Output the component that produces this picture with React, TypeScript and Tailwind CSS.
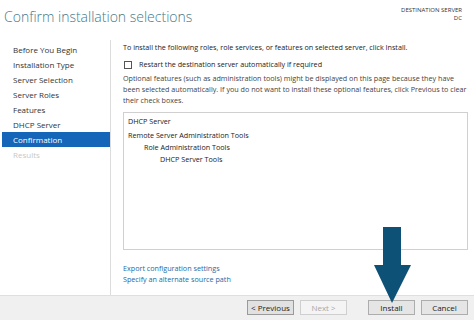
import React from "react";

const steps = [
  "Before You Begin",
  "Installation Type",
  "Server Selection",
  "Server Roles",
  "Features",
  "DHCP Server",
  "Confirmation",
  "Results",
];

function Arrow() {
  return (
    <svg className="absolute left-[373px] top-[227px]" width="40" height="76" viewBox="0 0 40 76">
      <path d="M10 0 H28 V38 H38 L19 76 L1 38 H10 Z" fill="#0d5176" />
    </svg>
  );
}

function Btn({ label, disabled, hi }: { label: string; disabled?: boolean; hi?: boolean }) {
  return (
    <div
      className={
        "w-[47px] h-[15px] flex items-center justify-center text-[8px] border " +
        (disabled
          ? "border-[#cfcfcf] bg-[#f4f4f4] text-[#a8a8a8]"
          : hi
          ? "border-[#9a9a9a] bg-[#e1e1e1] text-[#222]"
          : "border-[#adadad] bg-[#e5e5e5] text-[#222]")
      }
    >
      {label}
    </div>
  );
}

export default function App() {
  return (
    <div
      className="relative w-[474px] h-[320px] bg-white overflow-hidden text-[#222] flex flex-col"
      style={{ fontFamily: '"Open Sans", "Noto Sans", sans-serif' }}
    >
      <div className="flex justify-between h-[40px]">
        <h1 className="pl-[4px] pt-[7px] text-[14px] leading-[20px] font-light text-[#44798b]">
          Confirm installation selections
        </h1>
        <div className="pr-[12px] pt-[6px] text-right text-[6px] leading-[8px] text-[#333]">
          <div>DESTINATION SERVER</div>
          <div>DC</div>
        </div>
      </div>

      <div className="flex flex-1">
        <div className="w-[111px] border-r border-[#dcdcdc] pl-[2px] pt-[2px]">
          {steps.map((s) => (
            <div
              key={s}
              className={
                "h-[15px] pl-[11px] flex items-center text-[8px] " +
                (s === "Confirmation"
                  ? "bg-[#1565b9] text-white"
                  : s === "Results"
                  ? "text-[#c8c8c8]"
                  : "text-[#333]")
              }
            >
              {s}
            </div>
          ))}
        </div>

        <div className="flex-1 pl-[12px] pr-[6px] pt-[2px] text-[7.2px] leading-[11px] flex flex-col">
          <p>To install the following roles, role services, or features on selected server, click Install.</p>
          <div className="flex items-center gap-[7px] mt-[6px] ml-[1px]">
            <div className="w-[8px] h-[8px] border border-[#555] bg-white" />
            <span>Restart the destination server automatically if required</span>
          </div>
          <p className="mt-[3px] text-[#444]">
            Optional features (such as administration tools) might be displayed on this page because they have
            been selected automatically. If you do not want to install these optional features, click Previous to clear
            their check boxes.
          </p>
          <div className="mt-[6px] h-[138px] border border-[#d0d0d0] px-[4px] pt-[2px]">
            <div className="leading-[12px]">DHCP Server</div>
            <div className="mt-[2px] leading-[12px]">Remote Server Administration Tools</div>
            <div className="pl-[16px] leading-[12px]">Role Administration Tools</div>
            <div className="pl-[32px] leading-[12px]">DHCP Server Tools</div>
          </div>
          <div className="mt-auto mb-[10px] text-[#1d6aa5] leading-[11px]">
            <div>Export configuration settings</div>
            <div>Specify an alternate source path</div>
          </div>
        </div>
      </div>

      <div className="h-[25px] border-t border-[#dfdfdf] bg-[#f0f0f0] flex items-center justify-end pr-[6px] pb-[1px]">
        <div className="flex gap-[6px]">
          <Btn label="< Previous" hi />
          <Btn label="Next >" disabled />
        </div>
        <div className="flex gap-[6px] ml-[21px]">
          <Btn label="Install" />
          <Btn label="Cancel" />
        </div>
      </div>

      <Arrow />
    </div>
  );
}
